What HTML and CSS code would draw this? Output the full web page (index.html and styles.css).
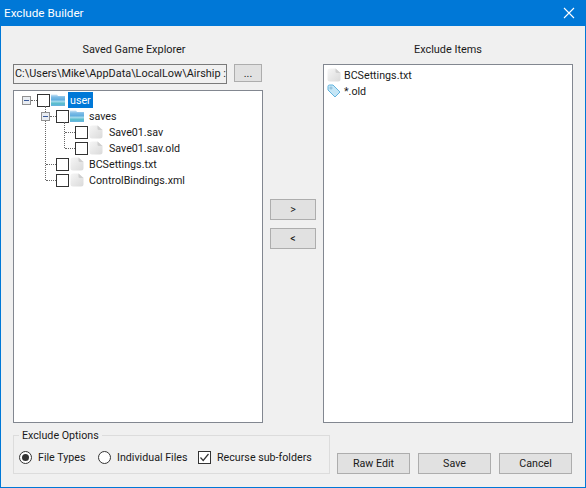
FILE: index.html
```html
<!DOCTYPE html>
<html lang="en">
<head>
    <meta charset="UTF-8">
    <title>Exclude Builder</title>
    <link rel="stylesheet" href="styles.css">
</head>
<body>
    <svg class="icon-defs" width="0" height="0">
        <defs>
            <linearGradient id="pageFill" x1="0" y1="0" x2="1" y2="1">
                <stop offset="0" stop-color="#f6f6f6"/>
                <stop offset="1" stop-color="#dadada"/>
            </linearGradient>
            <linearGradient id="folderFill" x1="0" y1="0" x2="0" y2="1">
                <stop offset="0" stop-color="#cfe6f6"/>
                <stop offset="0.22" stop-color="#7dbce6"/>
                <stop offset="0.45" stop-color="#62aee0"/>
                <stop offset="0.6" stop-color="#a0d8ea"/>
                <stop offset="0.8" stop-color="#55bccb"/>
                <stop offset="1" stop-color="#6cb4e2"/>
            </linearGradient>
            <symbol id="page" viewBox="0 0 14 14">
                <path d="M0.500 3Q0.500 0.500 3 0.500H8.500L13.500 5V11Q13.500 13.500 11 13.500H3Q0.500 13.500 0.500 11Z" fill="url(#pageFill)"/>
                <path d="M8.500 0.500L13.500 5H10Q8.500 5 8.500 3.500Z" fill="#cfcfcf"/>
            </symbol>
            <symbol id="folder" viewBox="0 0 14 12">
                <path d="M0 0.500H6L7 2H14V12H0Z" fill="url(#folderFill)"/>
            </symbol>
            <symbol id="tag" viewBox="0 0 14 14">
                <path d="M1 2.500Q1 1 2.500 1H6L13 8L8 13L1 6Z" fill="#c5e6f6" stroke="#63b4de"/>
                <circle cx="4" cy="4" r="1" fill="#fff" stroke="#3f8fc0" stroke-width="0.600"/>
            </symbol>
        </defs>
    </svg>

    <div class="window">
        <div class="titlebar">
            <span class="title">Exclude Builder</span>
            <svg class="close" width="12" height="12" viewBox="0 0 12 12">
                <path d="M1 1L11 11M11 1L1 11" stroke="#fff" stroke-width="1.100" fill="none"/>
            </svg>
        </div>

        <div class="content">
            <div class="panes">
                <div class="pane">
                    <div class="pane-title explorer-title">Saved Game Explorer</div>
                    <div class="path-row">
                        <div class="path-input">C:\Users\Mike\AppData\LocalLow\Airship :</div>
                        <div class="btn browse-btn">...</div>
                    </div>
                    <div class="box tree-box">
                        <ul class="tree">
                            <li class="node root">
                                <div class="row">
                                    <span class="expander"></span>
                                    <span class="check"></span>
                                    <svg class="node-icon folder-icon"><use href="#folder"/></svg>
                                    <span class="label selected">user</span>
                                </div>
                                <ul class="tree children">
                                    <li class="node">
                                        <div class="row">
                                            <span class="expander"></span>
                                            <span class="check"></span>
                                            <svg class="node-icon folder-icon"><use href="#folder"/></svg>
                                            <span class="label">saves</span>
                                        </div>
                                        <ul class="tree children">
                                            <li class="node leaf">
                                                <div class="row">
                                                    <span class="check"></span>
                                                    <svg class="node-icon"><use href="#page"/></svg>
                                                    <span class="label file-label">Save01.sav</span>
                                                </div>
                                            </li>
                                            <li class="node leaf">
                                                <div class="row">
                                                    <span class="check"></span>
                                                    <svg class="node-icon"><use href="#page"/></svg>
                                                    <span class="label file-label">Save01.sav.old</span>
                                                </div>
                                            </li>
                                        </ul>
                                    </li>
                                    <li class="node leaf">
                                        <div class="row">
                                            <span class="check"></span>
                                            <svg class="node-icon"><use href="#page"/></svg>
                                            <span class="label">BCSettings.txt</span>
                                        </div>
                                    </li>
                                    <li class="node leaf">
                                        <div class="row">
                                            <span class="check"></span>
                                            <svg class="node-icon"><use href="#page"/></svg>
                                            <span class="label">ControlBindings.xml</span>
                                        </div>
                                    </li>
                                </ul>
                            </li>
                        </ul>
                    </div>
                </div>

                <div class="move-buttons">
                    <div class="btn move-btn">&gt;</div>
                    <div class="btn move-btn">&lt;</div>
                </div>

                <div class="pane">
                    <div class="pane-title">Exclude Items</div>
                    <div class="box list-box">
                        <div class="list-item">
                            <svg class="node-icon"><use href="#page"/></svg>
                            <span>BCSettings.txt</span>
                        </div>
                        <div class="list-item">
                            <svg class="node-icon"><use href="#tag"/></svg>
                            <span>*.old</span>
                        </div>
                    </div>
                </div>
            </div>

            <div class="footer">
                <div class="group">
                    <span class="group-title">Exclude Options</span>
                    <div class="option option-types"><span class="radio on"></span>File Types</div>
                    <div class="option option-files"><span class="radio"></span>Individual Files</div>
                    <div class="option">
                        <svg class="checkbox" width="13" height="13" viewBox="0 0 13 13">
                            <rect x="0.500" y="0.500" width="12" height="12" fill="#fff" stroke="#333"/>
                            <path d="M2.500 6.500L5.200 9.500L10.500 3" fill="none" stroke="#333" stroke-width="1.200"/>
                        </svg>
                        Recurse sub-folders
                    </div>
                </div>
                <div class="actions">
                    <div class="btn action-btn">Raw Edit</div>
                    <div class="btn action-btn">Save</div>
                    <div class="btn action-btn">Cancel</div>
                </div>
            </div>
        </div>
    </div>
</body>
</html>
```
FILE: styles.css
```css
* {
    box-sizing: border-box;
}

html, body {
    margin: 0;
    height: 100%;
}

body {
    font-family: Roboto, "Open Sans", sans-serif;
    font-size: 10.7px;
    color: #1a1a1a;
    background-color: #f0f0f0;
}

.icon-defs {
    position: absolute;
}

ul {
    list-style: none;
    margin: 0;
    padding: 0;
}

.window {
    display: flex;
    flex-direction: column;
    width: 586px;
    height: 488px;
    border: 1px solid #0078d7;
    border-top: none;
    background-color: #f0f0f0;
}

.titlebar {
    display: flex;
    justify-content: space-between;
    align-items: center;
    height: 26px;
    padding: 0 10px 0 3px;
    background-color: #0078d7;
    color: #fff;
    flex-shrink: 0;
}

.title {
    font-size: 11.7px;
}

.content {
    flex: 1;
    display: flex;
    flex-direction: column;
    padding: 0 12px;
}

.panes {
    display: flex;
    height: 397px;
}

.pane {
    width: 250px;
    display: flex;
    flex-direction: column;
}

.pane-title {
    height: 38px;
    padding-top: 16px;
    line-height: 16px;
    font-size: 10.9px;
    text-align: center;
}

.explorer-title {
    padding-right: 8px;
}

.path-row {
    display: flex;
    justify-content: space-between;
    height: 26px;
}

.path-input {
    width: 214px;
    height: 20px;
    padding: 0 0 0 1px;
    font-size: 10.9px;
    line-height: 18px;
    border: 1px solid #7a7a7a;
    background-color: #f0f0f0;
    white-space: nowrap;
    overflow: hidden;
}

.btn {
    display: flex;
    justify-content: center;
    align-items: center;
    background-color: #e1e1e1;
    border: 1px solid #adadad;
}

.browse-btn {
    width: 28px;
    height: 18px;
    margin-right: 1px;
}

.box {
    flex: 1;
    background-color: #fff;
    border: 1px solid #828790;
}

.tree-box {
    padding: 1px 0 0 8px;
}

.row {
    display: flex;
    align-items: center;
    height: 16px;
}

.node {
    position: relative;
}

/* nested levels, dotted lines sit over the indent */
.children {
    position: relative;
    margin-left: 19px;
}

.children::before {
    content: "";
    position: absolute;
    left: 4px;
    top: -2px;
    bottom: 8px;
    border-left: 1px dotted #666;
}

.leaf .row {
    padding-left: 15px;
}

.children > .leaf::before {
    content: "";
    position: absolute;
    left: 5px;
    top: 8px;
    width: 10px;
    border-top: 1px dotted #666;
}

.expander {
    position: relative;
    width: 9px;
    height: 9px;
    margin-right: 6px;
    background-color: #e9edf2;
    border: 1px solid #919191;
}

.expander::before {
    content: "";
    position: absolute;
    left: 1px;
    top: 3px;
    width: 5px;
    height: 1px;
    background-color: #3a5a9a;
}

.expander::after {
    content: "";
    position: absolute;
    left: 8px;
    top: 3px;
    width: 6px;
    border-top: 1px dotted #666;
}

.check {
    width: 13px;
    height: 13px;
    background-color: #fff;
    border: 1px solid #333;
    flex-shrink: 0;
}

.node-icon {
    width: 14px;
    height: 14px;
    margin-left: 1px;
    flex-shrink: 0;
}

.folder-icon {
    height: 12px;
}

.label {
    height: 16px;
    line-height: 17px;
    margin-left: 4px;
    padding: 0 1px;
    white-space: nowrap;
}

.file-label {
    margin-left: 5px;
}

.selected {
    margin-left: 3px;
    background-color: #0078d7;
    color: #fff;
    padding: 0 2px;
}

.move-buttons {
    width: 60px;
    padding: 173px 0 0 7px;
    display: flex;
    flex-direction: column;
    gap: 8px;
}

.move-btn {
    width: 46px;
    height: 21px;
}

.list-box {
    padding: 2px 0 0 2px;
}

.list-item {
    display: flex;
    align-items: center;
    gap: 3px;
    height: 16px;
}

.footer {
    display: flex;
    justify-content: space-between;
    padding-top: 12px;
}

.group {
    position: relative;
    display: flex;
    align-items: center;
    width: 317px;
    height: 39px;
    padding: 5px 0 0 5px;
    border: 1px solid #dcdcdc;
}

.group-title {
    position: absolute;
    left: 5px;
    top: -8px;
    padding: 0 3px;
    line-height: 16px;
    background-color: #f0f0f0;
}

.option {
    display: flex;
    align-items: center;
    gap: 6px;
    white-space: nowrap;
}

.option-types {
    width: 79px;
}

.option-files {
    width: 100px;
}

.radio {
    width: 13px;
    height: 13px;
    border-radius: 50%;
    background-color: #fff;
    border: 1px solid #333;
    display: flex;
    justify-content: center;
    align-items: center;
}

.radio.on::before {
    content: "";
    width: 7px;
    height: 7px;
    border-radius: 50%;
    background-color: #333;
}

.actions {
    display: flex;
    gap: 8px;
    padding-top: 18px;
    margin-right: 1px;
}

.action-btn {
    width: 73px;
    height: 21px;
}
```
